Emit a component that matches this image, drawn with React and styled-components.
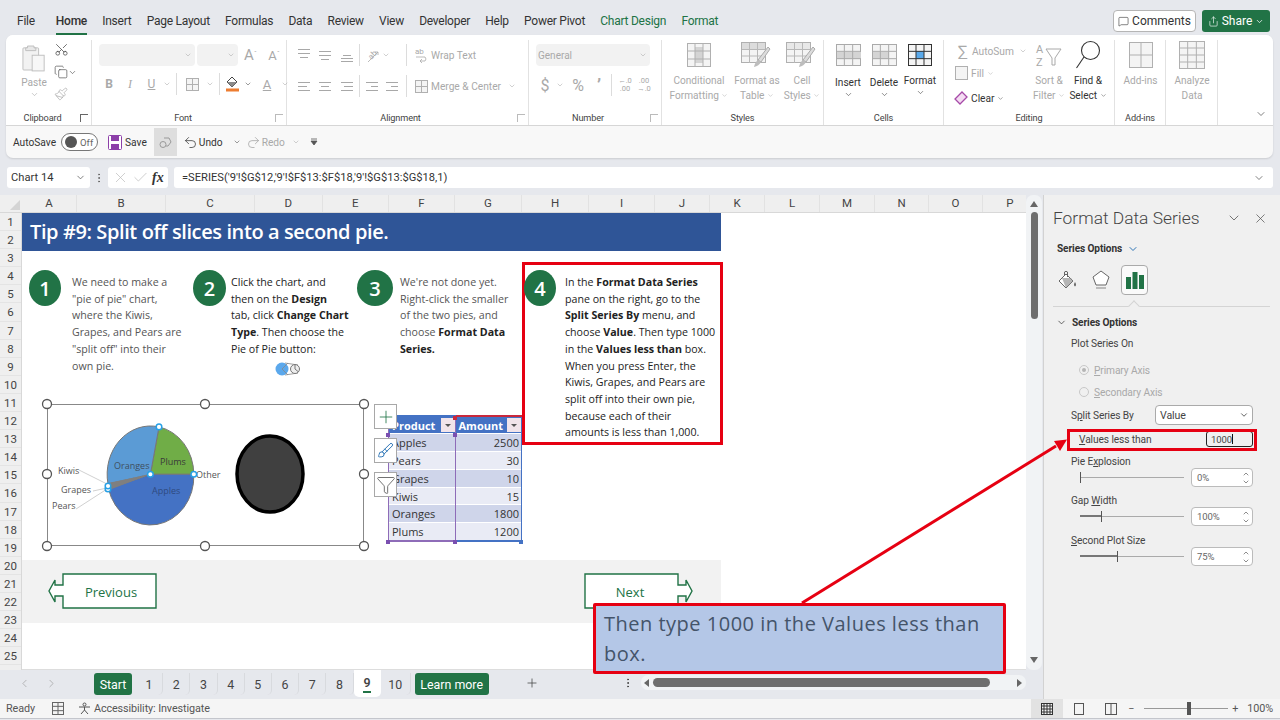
import React from 'react';
import styled, { createGlobalStyle } from 'styled-components';
import {
  Scissors, Copy, Paintbrush, ChevronDown, ChevronLeft, ChevronRight, X, Check, Plus,
  Filter, Undo2, Redo2, MessageSquare, Share, MoreVertical, Brush, ChevronUp,
} from 'lucide-react';

const UI = 'Roboto, "Liberation Sans", sans-serif';
const BODY = '"Open Sans", "Noto Sans", sans-serif';
const GREEN = '#217346';
const RED = '#e60012';
const OFF = '#a9a9a9';

const GlobalStyle = createGlobalStyle`
  html, body { margin: 0; padding: 0; background: #e6e8ed; }
  * { box-sizing: border-box; }
  #root { width: 1280px; height: 720px; overflow: hidden; }
`;

const Page = styled.div`
  position: relative;
  width: 1280px;
  height: 720px;
  display: flex;
  flex-direction: column;
  background: #e6e8ed;
  font-family: ${UI};
  color: #333;
  overflow: hidden;
`;

/* ---------- title tabs ---------- */
const TabRow = styled.div`
  height: 35px;
  display: flex;
  align-items: flex-start;
  padding: 10px 10px 0 17px;
  gap: 15.2px;
  font-size: 12px;
`;
const MenuTab = styled.div`
  height: 25px;
  padding-top: 4px;
  white-space: nowrap;
  letter-spacing: -0.25px;
  color: ${(p) => (p.$chart ? GREEN : '#333')};
  font-weight: ${(p) => (p.$active ? 500 : 400)};
  margin-left: ${(p) => (p.$active ? 5.8 : 0)}px;
  border-bottom: ${(p) => (p.$active ? `2px solid ${GREEN}` : 'none')};
`;
const TabSpacer = styled.div`flex: 1;`;
const CommentsButton = styled.div`
  width: 83px;
  height: 22px;
  margin-right: -9.2px;
  display: flex;
  align-items: center;
  justify-content: center;
  gap: 3px;
  background: #fff;
  border: 1px solid #b5b5b5;
  border-radius: 4px;
  font-size: 12px;
`;
const ShareButton = styled.div`
  width: 68px;
  height: 22px;
  display: flex;
  align-items: center;
  justify-content: center;
  gap: 3px;
  background: ${GREEN};
  color: #fff;
  border-radius: 3px;
  font-size: 12px;
`;

/* ---------- ribbon ---------- */
const RibbonCard = styled.div`
  width: 1267px;
  height: 123px;
  margin-left: 6px;
  background: #f8f8f8;
  border-radius: 7px;
  box-shadow: 0 1px 2px rgba(0, 0, 0, 0.12);
  overflow: hidden;
`;
const Groups = styled.div`
  height: 91px;
  display: flex;
  background: #fff;
  border-bottom: 1px solid #d6d6d6;
  padding-top: 5px;
`;
const Group = styled.div`
  position: relative;
  flex: none;
  width: ${(p) => p.$w}px;
  display: flex;
  flex-direction: column;
  border-right: ${(p) => (p.$plain ? 'none' : '1px solid #e2e2e2')};
`;
const GroupBody = styled.div`
  flex: 1;
  display: flex;
  padding-left: ${(p) => p.$pad || 0}px;
  min-height: 0;
`;
const GroupLabel = styled.div`
  height: 14px;
  line-height: 14px;
  padding-right: ${(p) => p.$pr || 0}px;
  font-size: 9.2px;
  letter-spacing: -0.15px;
  text-align: center;
  color: #444;
`;
const Launcher = styled.div`
  position: absolute;
  right: 3px;
  bottom: 3px;
  width: 8px;
  height: 8px;
  border: 1px solid ${(p) => (p.$on ? '#666' : '#bbb')};
  border-width: 1px 0 0 1px;
`;
const Column = styled.div`
  flex: none;
  display: flex;
  flex-direction: column;
  align-items: ${(p) => p.$align || 'center'};
  width: ${(p) => (p.$w ? `${p.$w}px` : 'auto')};
  padding-top: ${(p) => p.$top || 0}px;
  margin-left: ${(p) => p.$ml || 0}px;
  gap: ${(p) => p.$gap || 0}px;
`;
const ToolRow = styled.div`
  display: flex;
  align-items: center;
  height: ${(p) => p.$h || 22}px;
  margin-top: ${(p) => p.$mt || 0}px;
`;
const Slot = styled.div`
  flex: none;
  width: ${(p) => p.$w}px;
  display: flex;
  flex-direction: ${(p) => (p.$stack ? 'column' : 'row')};
  align-items: center;
  justify-content: center;
  line-height: ${(p) => (p.$stack ? '8px' : 'normal')};
  font-size: ${(p) => p.$size || 12}px;
  font-weight: ${(p) => p.$weight || 400};
  font-style: ${(p) => (p.$italic ? 'italic' : 'normal')};
  text-decoration: ${(p) => (p.$under ? 'underline' : 'none')};
  color: ${(p) => (p.$on ? '#444' : OFF)};
  font-family: ${(p) => (p.$serif ? '"Liberation Serif", serif' : 'inherit')};
`;
const Caret = styled.sup`font-size: 7px;`;
const Sep = styled.div`
  flex: none;
  width: 1px;
  height: ${(p) => p.$h || 22}px;
  background: #dcdcdc;
  margin: 0 ${(p) => p.$m || 0}px;
`;
const FakeSelect = styled.div`
  flex: none;
  width: ${(p) => p.$w}px;
  height: 22px;
  display: flex;
  align-items: center;
  justify-content: space-between;
  padding: 0 3px 0 2px;
  margin-right: ${(p) => p.$mr || 0}px;
  background: #f2f2f2;
  border-radius: 4px;
  font-size: 10px;
  color: ${OFF};
`;
const ToolText = styled.span`
  font-size: 10.2px;
  white-space: nowrap;
  color: ${(p) => (p.$on ? '#333' : OFF)};
  margin-left: ${(p) => p.$ml || 0}px;
`;
const BigTool = styled.div`
  flex: none;
  width: ${(p) => p.$w}px;
  display: flex;
  flex-direction: column;
  align-items: center;
  padding-top: ${(p) => p.$top || 0}px;
  font-size: 10.1px;
  line-height: 15px;
  text-align: center;
  white-space: nowrap;
  color: ${(p) => (p.$on ? '#333' : OFF)};
`;
const BigIcon = styled.div`
  height: ${(p) => p.$h || 30}px;
  display: flex;
  align-items: center;
  justify-content: center;
  margin-bottom: ${(p) => p.$mb ?? 3}px;
`;
const CollapseSlot = styled.div`
  position: absolute;
  right: 6px;
  bottom: 1px;
  color: #555;
`;
const TurnedScissors = styled(Scissors)`transform: rotate(-90deg);`;

/* quick access */
const QuickBar = styled.div`
  height: 32px;
  display: flex;
  align-items: center;
  padding-left: 7px;
  font-size: 10.2px;
  white-space: nowrap;
`;
const Toggle = styled.div`
  width: 37px;
  height: 18px;
  margin-left: 5px;
  display: flex;
  align-items: center;
  gap: 3px;
  padding-left: 3px;
  border: 1px solid #777;
  border-radius: 9px;
  background: #fff;
  font-size: 9.5px;
  color: #666;
`;
const ToggleKnob = styled.div`
  width: 12px;
  height: 12px;
  border-radius: 50%;
  background: #555;
`;
const QuickBox = styled.div`
  width: 23px;
  height: 28px;
  margin: 0 6px 0 7px;
  display: flex;
  align-items: center;
  justify-content: center;
  background: #dedede;
  color: #888;
`;
const QuickText = styled.span`
  color: ${(p) => (p.$off ? OFF : '#333')};
  margin-left: ${(p) => p.$ml || 0}px;
`;
const QuickGap = styled.div`
  display: flex;
  color: ${(p) => (p.$off ? OFF : '#444')};
  margin-left: ${(p) => p.$ml || 0}px;
`;

/* ---------- formula bar ---------- */
const FormulaRow = styled.div`
  height: 21px;
  margin-top: 9px;
  padding-left: 7px;
  display: flex;
  align-items: stretch;
`;
const FormulaBox = styled.div`
  flex: none;
  width: ${(p) => p.$w}px;
  margin-left: ${(p) => p.$ml || 0}px;
  display: flex;
  align-items: center;
  justify-content: ${(p) => p.$justify || 'flex-start'};
  gap: ${(p) => p.$gap || 0}px;
  padding: 0 ${(p) => p.$px || 4}px;
  background: #fff;
  border-radius: 3px;
  font-size: 11.15px;
  color: #333;
  white-space: nowrap;
`;
const FxMark = styled.span`
  font-family: "Liberation Serif", serif;
  font-style: italic;
  font-weight: 700;
  font-size: 14px;
`;
const Kebab = styled.div`
  width: 18px;
  display: flex;
  align-items: center;
  justify-content: center;
  color: #666;
`;

/* ---------- work area ---------- */
const Work = styled.div`
  height: 511px;
  display: flex;
`;
const WorkLeft = styled.div`
  flex: none;
  width: 1043px;
  display: flex;
  flex-direction: column;
`;
const SheetRow = styled.div`
  height: 482px;
  padding-top: 7px;
  display: flex;
`;
const SheetWrap = styled.div`
  flex: none;
  width: 1026px;
  display: flex;
  flex-direction: column;
`;
const ColHeaders = styled.div`
  height: 18px;
  display: flex;
  overflow: hidden;
  background: #efefef;
  border-bottom: 1px solid #d8d8d8;
  font-size: 11.5px;
  color: #444;
`;
const Corner = styled.div`
  flex: none;
  width: 22px;
  position: relative;
  &::after {
    content: '';
    position: absolute;
    right: 2px;
    bottom: 2px;
    border-left: 10px solid transparent;
    border-bottom: 10px solid #d4d4d4;
  }
`;
const ColHead = styled.div`
  flex: none;
  width: ${(p) => p.$w}px;
  text-align: center;
  line-height: 17px;
  border-right: 1px solid #e2e2e2;
`;
const SheetBody = styled.div`
  flex: 1;
  display: flex;
  min-height: 0;
`;
const RowHeaders = styled.div`
  flex: none;
  width: 22px;
  background: #efefef;
  border-right: 1px solid #d8d8d8;
  overflow: hidden;
`;
const RowHead = styled.div`
  height: 18.1px;
  line-height: 18px;
  text-align: center;
  font-size: 11.5px;
  color: #444;
  border-bottom: 1px solid #e4e4e4;
`;
const Canvas = styled.div`
  flex: 1;
  background: #fff;
  border-bottom: 1px solid #ddd;
`;
const Banner = styled.div`
  width: 699px;
  height: 38px;
  padding-left: 8px;
  line-height: 38px;
  background: #2f5597;
  color: #fff;
  font-family: ${BODY};
  font-weight: 600;
  font-size: 20px;
  letter-spacing: -0.4px;
  white-space: nowrap;
`;
const SlideGrid = styled.div`
  display: grid;
  grid-template-columns: 171px 164px 165px 201px;
  grid-template-rows: 153px 156px;
  font-family: ${BODY};
`;
const Step = styled.div`
  display: flex;
  gap: ${(p) => p.$gap}px;
  padding: 19px 0 0 ${(p) => p.$left || 0}px;
`;
const StepBadge = styled.div`
  flex: none;
  width: ${(p) => p.$w || 32}px;
  height: 36px;
  margin-left: ${(p) => p.$ml || 0}px;
  border-radius: 50%;
  display: flex;
  align-items: center;
  justify-content: center;
  background: ${GREEN};
  color: #fff;
  font-weight: 600;
  font-size: 20px;
`;
const StepText = styled.div`
  margin-top: 4px;
  font-size: 10.65px;
  line-height: 16.7px;
  color: ${(p) => (p.$dark ? '#222' : '#555')};
  white-space: nowrap;
  b { font-weight: 700; color: #222; }
`;
const PieButton = styled.div`
  margin: 4px 0 0 44px;
  height: 14px;
  display: flex;
`;
const StepFrame = styled.div`
  grid-column: 4;
  grid-row: 1 / span 2;
  align-self: start;
  width: 201px;
  height: 183px;
  margin-top: 11px;
  padding-top: 5px;
  display: flex;
  gap: 9px;
  border: 3px solid ${RED};
  background: #fff;
  position: relative;
  z-index: 2;
`;
const ChartRow = styled.div`
  grid-column: 1 / span 3;
  grid-row: 2;
  position: relative;
  display: flex;
  align-items: flex-start;
  padding-left: 25px;
`;
const ChartFrame = styled.div`
  flex: none;
  width: 317px;
  height: 142px;
`;
const ChartSvg = styled.svg`overflow: visible;`;
const ChartTools = styled.div`
  position: absolute;
  left: 352px;
  top: 0;
  display: flex;
  flex-direction: column;
  gap: 9px;
  z-index: 3;
`;
const ChartTool = styled.div`
  width: 23px;
  height: 25px;
  display: flex;
  align-items: center;
  justify-content: center;
  background: #fff;
  border: 1px solid #a8a8a8;
  color: ${(p) => p.$color};
`;
const RangeMark = styled.span`
  position: absolute;
  left: ${(p) => p.$x}px;
  top: ${(p) => p.$y}px;
  width: 4px;
  height: 4px;
  background: ${(p) => p.$color};
  z-index: 2;
`;
const DataTable = styled.table`
  flex: none;
  width: 134px;
  margin: 11px 0 0 24px;
  border-collapse: collapse;
  table-layout: fixed;
  font-family: ${BODY};
  font-size: 11px;
  color: #333;
  td, th {
    height: 17.8px;
    padding: 0 2px 0 3px;
    white-space: nowrap;
    overflow: hidden;
  }
  td:first-child, th:first-child {
    border-left: 1px solid #8e6cb8;
    border-right: 1px solid #8e6cb8;
  }
  td:last-child, th:last-child { border-right: 1px solid #4472c4; }
  tbody tr:last-child td { border-bottom: 2px solid #8e6cb8; }
  tbody tr:last-child td:last-child { border-bottom-color: #4472c4; }
  tbody td { border-top: 1px solid #fff; }
  tbody tr:nth-child(odd) td { background: #cfd5ea; }
  tbody tr:nth-child(even) td { background: #e9ebf5; }
  tbody td:last-child { text-align: right; }
`;
const HeadCell = styled.div`
  display: flex;
  align-items: center;
  justify-content: space-between;
  font-weight: 700;
  color: #fff;
  text-align: left;
`;
const HeadTh = styled.th`
  background: #4472c4;
  border-top: 2px solid ${(p) => p.$top};
`;
const FilterDrop = styled.span`
  width: 14px;
  height: 14px;
  margin-right: -2px;
  background: #f1e4ea;
  position: relative;
  &::after {
    content: '';
    position: absolute;
    left: 4px;
    top: 6px;
    border: 3px solid transparent;
    border-top-color: #555;
  }
`;
const NavRow = styled.div`
  width: 699px;
  height: 63px;
  padding: 13px 28px 0 26px;
  display: flex;
  justify-content: space-between;
  background: #f2f2f2;
`;
const NavShape = styled.div`
  position: relative;
  width: 110px;
  height: 36px;
  display: flex;
  align-items: center;
  justify-content: center;
  padding: 2px ${(p) => (p.$next ? '16px' : '0')} 0 ${(p) => (p.$next ? '0' : '16px')};
  font-family: ${BODY};
  font-size: 13px;
  color: ${GREEN};
  svg { position: absolute; left: 0; top: 0; }
  span { position: relative; }
`;

/* vertical scrollbar */
const VScroll = styled.div`
  flex: none;
  width: 16px;
  margin-right: 1px;
  display: flex;
  flex-direction: column;
  align-items: center;
  background: #f1f3f5;
  border-radius: 7px;
  padding-top: 2px;
`;
const ScrollUp = styled.div`
  border: 4px solid transparent;
  border-bottom: 6px solid #666;
  margin-bottom: 5px;
`;
const VThumb = styled.div`
  width: 7px;
  height: 107px;
  border-radius: 4px;
  background: #6e6e6e;
`;
const ScrollDown = styled.div`
  margin-top: auto;
  margin-bottom: 3px;
  border: 4px solid transparent;
  border-top: 6px solid #666;
`;

/* sheet tabs */
const SheetTabs = styled.div`
  height: 29px;
  display: flex;
  align-items: flex-start;
  padding: 0 0 0 18px;
  font-size: 13.4px;
  color: #444;
`;
const TabArrows = styled.div`
  width: 76px;
  height: 26px;
  display: flex;
  align-items: center;
  gap: 14px;
  color: #999;
`;
const GreenTab = styled.div`
  flex: none;
  width: ${(p) => p.$w}px;
  height: 22px;
  margin: 3px ${(p) => p.$mr || 0}px 0 ${(p) => p.$ml || 0}px;
  display: flex;
  align-items: center;
  justify-content: center;
  background: ${GREEN};
  color: #fff;
  border-radius: 3px;
  font-size: 12.4px;
`;
const SheetTab = styled.div`
  flex: none;
  width: ${(p) => p.$w || 27.2}px;
  height: ${(p) => (p.$active ? 27 : 22)}px;
  margin-top: ${(p) => (p.$active ? 0 : 3)}px;
  display: flex;
  flex-direction: column;
  align-items: center;
  justify-content: center;
  background: ${(p) => (p.$active ? '#fff' : 'transparent')};
  border-right: ${(p) => (p.$active ? 'none' : '1px solid #d8dade')};
  border-radius: 0 0 5px 5px;
  font-weight: ${(p) => (p.$active ? 600 : 400)};
  font-size: 12.4px;
  &::after {
    content: ${(p) => (p.$active ? "''" : 'none')};
    width: 8px;
    height: 2px;
    background: ${GREEN};
    margin-top: 1px;
  }
`;
const TabTail = styled.div`
  display: flex;
  align-items: center;
  height: 26px;
  color: #444;
  margin-left: ${(p) => p.$ml}px;
`;
const HScroll = styled.div`
  flex: none;
  width: 385px;
  height: 15px;
  margin: 5px 0 0 ${(p) => p.$ml}px;
  display: flex;
  align-items: center;
  padding: 0 4px 0 3px;
  background: #f1f3f5;
  border-radius: 7px;
`;
const ArrowLeft = styled.div`
  border: 4px solid transparent;
  border-right: 5px solid #666;
  border-left: 0;
  margin-right: 4px;
`;
const HThumb = styled.div`
  width: 337px;
  height: 9px;
  border-radius: 5px;
  background: #6e6e6e;
`;
const ArrowRight = styled.div`
  margin-left: auto;
  border: 4px solid transparent;
  border-left: 5px solid #666;
  border-right: 0;
`;

/* ---------- side pane ---------- */
const Pane = styled.div`
  flex: none;
  width: 237px;
  margin-top: 7px;
  padding: 11px 10px 0 9px;
  background: #f0f0f0;
  border-left: 1px solid #d2d2d2;
  font-size: 10.2px;
  letter-spacing: -0.1px;
  color: #444;
`;
const PaneTop = styled.div`
  display: flex;
  align-items: center;
  height: 24px;
`;
const PaneTitle = styled.div`
  flex: 1;
  font-size: 17.4px;
  font-weight: 300;
  letter-spacing: 0;
  color: #444;
  white-space: nowrap;
`;
const PaneAction = styled.span`
  display: flex;
  color: #555;
  margin-right: ${(p) => p.$mr}px;
`;
const PaneSub = styled.div`
  display: flex;
  align-items: center;
  gap: 5px;
  height: 13px;
  margin: 12px 0 0 4px;
  font-size: 10.1px;
  font-weight: 700;
  color: #333;
`;
const IconTabs = styled.div`
  position: relative;
  display: flex;
  align-items: center;
  height: 42px;
  margin-top: 10px;
  padding-left: 3px;
  border-bottom: 1px solid #d4d4d4;
  padding-bottom: 11px;
  &::after {
    content: '';
    position: absolute;
    left: 77px;
    bottom: -4px;
    width: 7px;
    height: 7px;
    background: #f0f0f0;
    border-left: 1px solid #d4d4d4;
    border-top: 1px solid #d4d4d4;
    transform: rotate(45deg);
  }
`;
const IconSlot = styled.div`
  width: ${(p) => p.$w}px;
  height: 30px;
  margin-right: ${(p) => p.$mr || 0}px;
  display: flex;
  align-items: center;
  justify-content: center;
  border: ${(p) => (p.$active ? '1px solid #aaa' : 'none')};
  border-radius: 4px;
  background: ${(p) => (p.$active ? '#fafafa' : 'none')};
`;
const SectionHead = styled.div`
  display: flex;
  align-items: center;
  gap: 5px;
  height: 13px;
  margin: 9px 0 0 3px;
  font-size: 10.1px;
  font-weight: 700;
  color: #333;
`;
const FieldLabel = styled.div`
  margin: ${(p) => p.$mt || 0}px 0 0 18px;
  height: 14px;
  line-height: ${(p) => p.$lh || 14}px;
  u { text-underline-offset: 1px; }
`;
const RadioRow = styled.div`
  display: flex;
  align-items: center;
  gap: 5px;
  margin: ${(p) => p.$mt}px 0 0 26px;
  color: ${OFF};
  height: 14px;
  u { text-underline-offset: 1px; }
`;
const Radio = styled.div`
  width: 10px;
  height: 10px;
  border-radius: 50%;
  border: 1px solid #c8c8c8;
  display: flex;
  align-items: center;
  justify-content: center;
  &::after {
    content: '';
    width: 4px;
    height: 4px;
    border-radius: 50%;
    background: ${(p) => (p.$on ? '#b5b5b5' : 'transparent')};
  }
`;
const SplitRow = styled.div`
  display: flex;
  align-items: center;
  justify-content: space-between;
  margin: 6px 17px 0 18px;
  height: 20px;
`;
const SelectBox = styled.div`
  width: 98px;
  height: 20px;
  display: flex;
  align-items: center;
  justify-content: space-between;
  padding: 0 3px 0 4px;
  background: #fff;
  border: 1px solid #aaa;
  border-radius: 4px;
  font-size: 10.6px;
`;
const ValuesRow = styled.div`
  display: flex;
  align-items: center;
  justify-content: space-between;
  margin: 6px 17px 0 26px;
  height: 16px;
`;
const ValueInput = styled.div`
  width: 47px;
  height: 16px;
  padding-left: 4px;
  line-height: 15px;
  font-size: 9.5px;
  background: #f0f0f0;
  border: 1px solid #222;
  border-radius: 3px;
  &::after {
    content: '';
    display: inline-block;
    width: 1px;
    height: 10px;
    background: #111;
    vertical-align: -1px;
  }
`;
const SliderRow = styled.div`
  display: flex;
  align-items: center;
  justify-content: space-between;
  margin: 0 17px 0 27px;
  height: 19px;
`;
const SliderTrack = styled.div`
  position: relative;
  width: 104px;
  height: 1px;
  background: #aaa;
`;
const SliderFill = styled.div`
  height: 2px;
  margin-top: -1px;
  background: #777;
`;
const SliderThumb = styled.div`
  position: absolute;
  top: -5px;
  width: 1px;
  height: 11px;
  background: #555;
`;
const SpinBox = styled.div`
  width: 62px;
  height: 19px;
  display: flex;
  align-items: center;
  justify-content: space-between;
  padding: 0 2px 0 5px;
  background: #fff;
  border: 1px solid #bbb;
  border-radius: 4px;
  font-size: 9.5px;
  color: #666;
`;
const SpinArrows = styled.div`
  display: flex;
  flex-direction: column;
  color: #555;
`;

/* ---------- status bar ---------- */
const StatusBar = styled.div`
  height: 20px;
  display: flex;
  align-items: center;
  padding-left: 6px;
  background: #f5f5f5;
  border-bottom: 1px solid #c4c6cc;
  font-size: 10.8px;
  letter-spacing: -0.1px;
  color: #555;
  white-space: nowrap;
`;
const StatusItem = styled.span`
  display: flex;
  flex: ${(p) => (p.$grow ? 1 : 'none')};
  margin: 0 ${(p) => p.$mr || 0}px 0 ${(p) => p.$ml || 0}px;
`;
const ViewButton = styled.div`
  width: 32px;
  height: 19px;
  display: flex;
  align-items: center;
  justify-content: center;
  background: ${(p) => (p.$active ? '#e2e2e2' : 'transparent')};
  color: #555;
`;
const ZoomTrack = styled.div`
  position: relative;
  width: 84px;
  height: 1px;
  margin: 0 4px;
  background: #999;
`;
const ZoomThumb = styled.div`
  position: absolute;
  left: 43px;
  top: -6px;
  width: 4px;
  height: 13px;
  background: #555;
`;

/* ---------- overlays ---------- */
const Callout = styled.div`
  position: absolute;
  left: 593px;
  top: 603px;
  width: 413px;
  height: 71px;
  padding: 3px 8px;
  background: #b4c7e7;
  border: 3px solid ${RED};
  border-radius: 2px;
  font-family: ${BODY};
  font-size: 20px;
  line-height: 30px;
  letter-spacing: 0.5px;
  color: #44546a;
  z-index: 5;
`;
const ValuesFrame = styled.div`
  position: absolute;
  left: 1067px;
  top: 429px;
  width: 190px;
  height: 22px;
  border: 3px solid ${RED};
  pointer-events: none;
  z-index: 5;
`;
const ArrowLayer = styled.svg`
  position: absolute;
  left: 0;
  top: 0;
  z-index: 4;
  pointer-events: none;
`;

/* ---------- drawings ---------- */
const Chev = ({ s = 9, on, color }) => (
  <ChevronDown size={s} strokeWidth={1.6} color={color || (on ? '#444' : OFF)} />
);

const TableIcon = ({ w = 26, h = 22, c = '#b0b0b0', fill = '#d4d4d4', cols = 3, rows = 3, band }) => {
  const lines = [];
  for (let i = 1; i < cols; i++) lines.push(<line key={`c${i}`} x1={(w * i) / cols} y1="0" x2={(w * i) / cols} y2={h} stroke={c} />);
  for (let i = 1; i < rows; i++) lines.push(<line key={`r${i}`} x1="0" y1={(h * i) / rows} x2={w} y2={(h * i) / rows} stroke={c} />);
  return (
    <svg width={w} height={h} viewBox={`0 0 ${w} ${h}`}>
      <rect x=".5" y=".5" width={w - 1} height={h - 1} fill="#f4f4f4" stroke={c} />
      {band && <rect x={band[0]} y={band[1]} width={band[2]} height={band[3]} fill={fill} />}
      {lines}
    </svg>
  );
};

const BrushedTable = ({ band }) => (
  <svg width="32" height="32" viewBox="0 0 32 32">
    <rect x=".5" y="3.5" width="24" height="20" fill="#f4f4f4" stroke="#b0b0b0" />
    <rect x="1" y="4" width="23" height="6" fill={band} />
    <path d="M8.5 4v20M16.500 4v20M1 10.500h24M1 17h24" stroke="#b8b8b8" />
    <path d="M27 8 L17 21 L20 23 L29 10 Z" fill="#dcdcdc" stroke="#aaa" />
    <path d="M17 21 q-3 2 -4 7 q5 -1 7 -5 Z" fill="#bdbdbd" />
  </svg>
);

const LinesIcon = ({ widths, y = [3, 7, 11] }) => (
  <svg width="14" height="14" viewBox="0 0 14 14">
    {widths.map((w, i) => (
      <line key={i} x1={w[0]} x2={w[1]} y1={y[i] + 0.5} y2={y[i] + 0.5} stroke="#a8a8a8" />
    ))}
  </svg>
);

const ClipboardIcon = () => (
  <svg width="24" height="30" viewBox="0 0 26 32">
    <rect x="1" y="5" width="17" height="24" rx="1" fill="#f2f2f2" stroke="#bdbdbd" />
    <path d="M6 5 V3 h7 v2 h2 v3 H4 V5 Z" fill="#e8e8e8" stroke="#bdbdbd" />
    <rect x="11" y="13" width="13" height="17" fill="#f7f7f7" stroke="#bdbdbd" />
  </svg>
);

const FillIcon = () => (
  <svg width="14" height="16" viewBox="0 0 14 16">
    <path d="M6 1 L11 6 L6 11 L1 6 Z" fill="#fff" stroke="#444" />
    <path d="M1 6 H11 L6 11 Z" fill="#8a8a8a" />
    <rect x="0" y="12.500" width="13" height="3" fill="#ed7d31" />
  </svg>
);

const WrapIcon = () => (
  <svg width="13" height="16" viewBox="0 0 13 16">
    <text x="0" y="7" fontSize="8" fill={OFF} fontFamily={UI}>ab</text>
    <path d="M1 10 H10 Q12 12 10 14 H5 M7 12 L5 14 L7 16" fill="none" stroke={OFF} strokeWidth=".8" />
  </svg>
);

const OrientIcon = () => (
  <svg width="15" height="15" viewBox="0 0 15 15">
    <text x="3" y="10" fontSize="8" fill={OFF} fontFamily={UI} transform="rotate(-45 7 7)">ab</text>
    <path d="M3 14 L13 4 M10 4 H13 V7" fill="none" stroke={OFF} strokeWidth=".8" />
  </svg>
);

const FindIcon = () => (
  <svg width="26" height="30" viewBox="0 0 26 30">
    <circle cx="15.500" cy="10.500" r="9" fill="none" stroke="#333" strokeWidth="1.100" />
    <line x1="9" y1="17" x2="1.500" y2="28" stroke="#333" strokeWidth="1.100" />
  </svg>
);

const SortIcon = () => (
  <svg width="28" height="28" viewBox="0 0 28 28">
    <text x="1" y="12" fontSize="11" fill={OFF} fontFamily={UI}>A</text>
    <text x="1" y="25" fontSize="11" fill={OFF} fontFamily={UI}>Z</text>
    <path d="M11 8 H26 L20 17 V24 H17 V17 Z" fill="none" stroke={OFF} />
  </svg>
);

const ChartBarsIcon = () => (
  <svg width="18" height="18" viewBox="0 0 18 18">
    <rect x="0" y="6" width="5" height="12" fill={GREEN} />
    <rect x="6.500" y="1" width="5" height="17" fill={GREEN} />
    <rect x="13" y="4" width="5" height="14" fill={GREEN} />
  </svg>
);

const BucketIcon = () => (
  <svg width="20" height="20" viewBox="0 0 20 20">
    <path d="M8 4 L15 11 L8 18 L1 11 Z" fill="#fff" stroke="#666" />
    <path d="M6.500 5 L6.500 2 Q8 .5 9.500 2 L9.500 7" fill="none" stroke="#666" />
    <path d="M4 8 H13 L15 11 L8 18 Z" fill="#8e8e8e" opacity=".65" />
    <path d="M17 12 q2 3 0 4.500 q-2 -1.500 0 -4.500Z" fill="#666" />
  </svg>
);

const PentagonIcon = () => (
  <svg width="18" height="20" viewBox="0 0 18 20">
    <path d="M9 1 L17 7 L14 15 H4 L1 7 Z" fill="#fff" stroke="#666" />
    <path d="M4 18 H14" stroke="#bbb" strokeWidth="2" />
  </svg>
);

const PieOfPieIcon = () => (
  <svg width="27" height="14" viewBox="0 0 27 14">
    <circle cx="7" cy="7" r="6.500" fill="#5ba8ec" />
    <path d="M7 7 L13 1 M7 7 L13 13 M10 1 L23 3 M10 13 L23 11" stroke="#888" fill="none" strokeWidth=".8" />
    <circle cx="20" cy="7" r="4.500" fill="#eee" stroke="#777" />
    <path d="M20 3 V7 L23 9.500" stroke="#777" fill="none" />
  </svg>
);

const NavArrow = ({ flip }) => (
  <svg width="110" height="36" viewBox="0 0 110 36">
    <path
      d="M15 1 H108 V35 H15 V23 H7 V29 L1 18 L7 7 V12 H15 Z"
      fill="#fff"
      stroke={GREEN}
      strokeWidth="1.400"
      transform={flip ? 'translate(110 0) scale(-1 1)' : undefined}
    />
  </svg>
);

const Handle = ({ x, y }) => <circle cx={x} cy={y} r="4.500" fill="#fff" stroke="#555" strokeWidth="1.300" />;
const Dot = ({ x, y }) => <circle cx={x} cy={y} r="2.800" fill="#fff" stroke="#27a0e6" strokeWidth="1.500" />;

const PieChart = () => (
  <ChartSvg width="317" height="142" viewBox="0 0 317 142">
    <rect x="0.5" y="0.5" width="316" height="141" fill="#fff" stroke="#888" />
    <g fontFamily={BODY} fontSize="9" fill="#555">
      <path d="M103.400 70.300 L112 22.900 A43.400 48.400 0 0 1 146.800 70.300 Z" fill="#70ad47" stroke="#777" />
      <path d="M103.400 70.300 L146.800 70.300 A43.400 48.400 0 0 1 61.500 85 Z" fill="#4472c4" stroke="#777" />
      <path d="M103.400 70.300 L61 80 A43.400 48.400 0 0 1 112 22.900 Z" fill="#5b9bd5" stroke="#777" />
      <path d="M103.400 70.300 L61 79 L62 86 Z" fill="#7f7f7f" />
      <text x="67" y="65" fill="#3f4f60">Oranges</text>
      <text x="113" y="61" fill="#3a3a3a">Plums</text>
      <text x="105" y="90" fill="#2f4a80">Apples</text>
      <text x="149" y="74">Other</text>
      <text x="11" y="70">Kiwis</text>
      <text x="14" y="89">Grapes</text>
      <text x="5" y="105">Pears</text>
      <path d="M32 66 L60 80 M46 87 L60 84 M29 105 L60 85" fill="none" stroke="#c4c4c4" strokeWidth=".8" />
      <ellipse cx="223" cy="70" rx="33" ry="38" fill="#404040" stroke="#000" strokeWidth="3.500" />
      <Dot x={112} y={22.900} />
      <Dot x={146.800} y={70.300} />
      <Dot x={103.400} y={70.300} />
      <Dot x={61} y={85} />
      <Dot x={61} y={82} />
    </g>
    <Handle x={0} y={0} />
    <Handle x={158} y={0} />
    <Handle x={317} y={0} />
    <Handle x={0} y={70} />
    <Handle x={317} y={70} />
    <Handle x={0} y={142} />
    <Handle x={158} y={142} />
    <Handle x={317} y={142} />
  </ChartSvg>
);

const MENU = ['File', 'Home', 'Insert', 'Page Layout', 'Formulas', 'Data', 'Review', 'View', 'Developer', 'Help', 'Power Pivot'];
const COLS = [['A', 55], ['B', 89], ['C', 89], ['D', 67.6], ['E', 66.4], ['F', 66], ['G', 67], ['H', 67], ['I', 66], ['J', 55], ['K', 55], ['L', 55], ['M', 55], ['N', 54], ['O', 54], ['P', 55]];
const ROWS = Array.from({ length: 25 }, (_, i) => i + 1);
const DATA = [['Apples', 2500], ['Pears', 30], ['Grapes', 10], ['Kiwis', 15], ['Oranges', 1800], ['Plums', 1200]];
const MARKS = [
  [364, 29, '#7a4fb0'], [431, 29, '#7a4fb0'], [364, 136, '#7a4fb0'], [431, 136, '#7a4fb0'],
  [431, 12, '#c8283c'], [497, 136, '#4472c4'],
];
const SLIDERS = [
  { label: <>Pie E<u>x</u>plosion</>, value: '0%', pos: 0, mt: 7 },
  { label: <>Gap <u>W</u>idth</>, value: '100%', pos: 21, mt: 6 },
  { label: <><u>S</u>econd Plot Size</>, value: '75%', pos: 37, mt: 7 },
];

const Ribbon = () => (
  <RibbonCard>
    <Groups>
      <Group $w={86}>
        <GroupBody $pad={10}>
          <BigTool $w={36} $top={2}>
            <BigIcon $h={32} $mb={1}><ClipboardIcon /></BigIcon>
            Paste
            <Chev />
          </BigTool>
          <Column $w={22} $top={2} $gap={7} $ml={2} $align="flex-start">
            <TurnedScissors size={15} strokeWidth={1.3} color="#555" />
            <ToolRow $h={16}><Copy size={14} strokeWidth={1.2} color="#555" /><Chev on /></ToolRow>
            <Paintbrush size={14} strokeWidth={1.2} color={OFF} />
          </Column>
        </GroupBody>
        <GroupLabel $pr={12}>Clipboard</GroupLabel>
        <Launcher $on />
      </Group>

      <Group $w={195}>
        <GroupBody $pad={7}>
          <Column $align="flex-start">
            <ToolRow $mt={4}>
              <FakeSelect $w={96} $mr={2}><span /><Chev s={8} /></FakeSelect>
              <FakeSelect $w={41}><span /><Chev s={8} /></FakeSelect>
              <Slot $w={25} $size={15}>A<Caret>ˆ</Caret></Slot>
              <Slot $w={22} $size={13}>A<Caret>ˇ</Caret></Slot>
            </ToolRow>
            <ToolRow $mt={7}>
              <Slot $w={20} $weight={700}>B</Slot>
              <Slot $w={22} $italic $serif>I</Slot>
              <Slot $w={21} $under>U</Slot>
              <Slot $w={10}><Chev s={8} /></Slot>
              <Sep $m={4} />
              <Slot $w={22}><TableIcon w={13} h={13} cols={2} rows={2} /></Slot>
              <Slot $w={13}><Chev s={8} /></Slot>
              <Sep $m={3} />
              <Slot $w={20}><FillIcon /></Slot>
              <Slot $w={10}><Chev s={8} on /></Slot>
              <Slot $w={28} $under $size={13}>A</Slot>
              <Slot $w={8}><Chev s={8} /></Slot>
            </ToolRow>
          </Column>
        </GroupBody>
        <GroupLabel $pr={12}>Font</GroupLabel>
        <Launcher />
      </Group>

      <Group $w={242}>
        <GroupBody $pad={6}>
          <Column $align="flex-start">
            <ToolRow $mt={4}>
              <Slot $w={21}><LinesIcon widths={[[1, 13], [1, 13], [3, 11]]} y={[1, 5, 9]} /></Slot>
              <Slot $w={22}><LinesIcon widths={[[1, 13], [1, 13], [3, 11]]} y={[3, 7, 11]} /></Slot>
              <Slot $w={21}><LinesIcon widths={[[3, 11], [1, 13], [1, 13]]} y={[7, 10, 13]} /></Slot>
              <Sep $m={2} />
              <Slot $w={20}><OrientIcon /></Slot>
              <Slot $w={8}><Chev s={8} /></Slot>
              <Slot $w={12} />
              <Sep $m={4} />
              <Slot $w={20}><WrapIcon /></Slot>
              <ToolText>Wrap Text</ToolText>
            </ToolRow>
            <ToolRow $mt={9}>
              <Slot $w={21}><LinesIcon widths={[[1, 13], [1, 10], [1, 13]]} /></Slot>
              <Slot $w={22}><LinesIcon widths={[[1, 13], [3, 11], [1, 13]]} /></Slot>
              <Slot $w={21}><LinesIcon widths={[[1, 13], [4, 13], [1, 13]]} /></Slot>
              <Sep $m={2} />
              <Slot $w={20}><LinesIcon widths={[[1, 13], [6, 13], [1, 13]]} /></Slot>
              <Slot $w={20}><LinesIcon widths={[[1, 13], [6, 13], [1, 13]]} /></Slot>
              <Sep $m={4} />
              <Slot $w={20}><TableIcon w={13} h={13} cols={2} rows={2} /></Slot>
              <ToolText>Merge &amp; Center</ToolText>
              <Slot $w={22}><Chev s={8} /></Slot>
            </ToolRow>
          </Column>
        </GroupBody>
        <GroupLabel $pr={14}>Alignment</GroupLabel>
        <Launcher />
      </Group>

      <Group $w={133}>
        <GroupBody $pad={7}>
          <Column $align="flex-start">
            <ToolRow $mt={4}>
              <FakeSelect $w={114}>General<Chev s={8} /></FakeSelect>
            </ToolRow>
            <ToolRow $mt={8}>
              <Slot $w={18} $size={16}>$</Slot>
              <Slot $w={12}><Chev s={8} /></Slot>
              <Slot $w={24} $size={16}>%</Slot>
              <Slot $w={18} $size={18} $weight={700}>’</Slot>
              <Sep $m={3} />
              <Slot $w={20} $size={7.5} $stack><span>←.0</span><span>.00</span></Slot>
              <Slot $w={18} $size={7.5} $stack><span>.00</span><span>→.0</span></Slot>
            </ToolRow>
          </Column>
        </GroupBody>
        <GroupLabel $pr={14}>Number</GroupLabel>
        <Launcher />
      </Group>

      <Group $w={162}>
        <GroupBody $pad={5}>
          <BigTool $w={64}>
            <BigIcon><TableIcon w={24} h={24} band={[8, 4, 8, 16]} /></BigIcon>
            Conditional
            <span>Formatting <Chev s={7} /></span>
          </BigTool>
          <BigTool $w={52}>
            <BigIcon><BrushedTable band="#dcdcdc" /></BigIcon>
            Format as
            <span>Table <Chev s={7} /></span>
          </BigTool>
          <BigTool $w={38}>
            <BigIcon><BrushedTable band="#e8e8e8" /></BigIcon>
            Cell
            <span>Styles <Chev s={7} /></span>
          </BigTool>
        </GroupBody>
        <GroupLabel>Styles</GroupLabel>
      </Group>

      <Group $w={120}>
        <GroupBody $pad={6}>
          <BigTool $w={36} $on>
            <BigIcon $mb={5}><TableIcon w={25} h={22} c="#aaa" band={[1, 8, 24, 7]} /></BigIcon>
            Insert
            <Chev on />
          </BigTool>
          <BigTool $w={36} $on>
            <BigIcon $mb={5}><TableIcon w={25} h={22} c="#aaa" band={[1, 8, 16, 7]} /></BigIcon>
            Delete
            <Chev on />
          </BigTool>
          <BigTool $w={36} $on>
            <BigIcon><TableIcon w={24} h={22} c="#333" fill="#5aa9ea" band={[8, 7, 8, 8]} /></BigIcon>
            Format
            <Chev on />
          </BigTool>
        </GroupBody>
        <GroupLabel>Cells</GroupLabel>
      </Group>

      <Group $w={171}>
        <GroupBody $pad={10}>
          <Column $w={75} $align="flex-start" $top={1}>
            <ToolRow $h={20}>
              <Slot $w={17} $size={16}>∑</Slot>
              <ToolText $ml={1}>AutoSum</ToolText>
              <Slot $w={18}><Chev s={8} /></Slot>
            </ToolRow>
            <ToolRow $h={16} $mt={4}>
              <Slot $w={14}><TableIcon w={13} h={14} cols={1} rows={1} /></Slot>
              <ToolText $ml={3}>Fill <Chev s={7} /></ToolText>
            </ToolRow>
            <ToolRow $h={18} $mt={8}>
              <svg width="14" height="14" viewBox="0 0 14 14">
                <path d="M8 1 L13 6 L6 13 L1 8 Z" fill="#f4dcf2" stroke="#a64aa8" strokeWidth="1.300" />
              </svg>
              <ToolText $on $ml={3}>Clear <Chev s={7} on /></ToolText>
            </ToolRow>
          </Column>
          <BigTool $w={40}>
            <BigIcon><SortIcon /></BigIcon>
            Sort &amp;
            <span>Filter <Chev s={7} /></span>
          </BigTool>
          <BigTool $w={38} $on>
            <BigIcon><FindIcon /></BigIcon>
            Find &amp;
            <span>Select <Chev s={7} on /></span>
          </BigTool>
        </GroupBody>
        <GroupLabel>Editing</GroupLabel>
      </Group>

      <Group $w={51}>
        <GroupBody>
          <BigTool $w={51}>
            <BigIcon><TableIcon w={24} h={26} cols={2} rows={2} /></BigIcon>
            Add-ins
          </BigTool>
        </GroupBody>
        <GroupLabel>Add-ins</GroupLabel>
      </Group>

      <Group $w={52}>
        <GroupBody>
          <BigTool $w={52}>
            <BigIcon><TableIcon w={26} h={28} cols={3} rows={4} /></BigIcon>
            Analyze
            <span>Data</span>
          </BigTool>
        </GroupBody>
      </Group>

      <Group $w={55} $plain>
        <CollapseSlot><ChevronDown size={12} strokeWidth={1.5} /></CollapseSlot>
      </Group>
    </Groups>
    <QuickBar>
      AutoSave
      <Toggle><ToggleKnob />Off</Toggle>
      <QuickGap $ml={10}>
        <svg width="14" height="15" viewBox="0 0 14 15">
          <rect x=".5" y=".5" width="13" height="14" rx="1" fill="#fff" stroke="#8c3fa8" />
          <rect x="3" y="1" width="8" height="5" fill="#8c3fa8" />
          <rect x="3" y="9" width="8" height="6" fill="#8c3fa8" />
        </svg>
      </QuickGap>
      <QuickText $ml={3}>Save</QuickText>
      <QuickBox>
        <svg width="13" height="14" viewBox="0 0 13 14">
          <circle cx="4" cy="9.500" r="3" fill="none" stroke="#999" />
          <path d="M5 3 H10 L12 7 L9 11 H7" fill="none" stroke="#999" />
        </svg>
      </QuickBox>
      <QuickGap><Undo2 size={15} strokeWidth={1.3} /></QuickGap>
      <QuickText $ml={1}>Undo</QuickText>
      <QuickGap $ml={10}><Chev s={8} on /></QuickGap>
      <QuickGap $off $ml={5}><Redo2 size={15} strokeWidth={1.3} /></QuickGap>
      <QuickText $off $ml={1}>Redo</QuickText>
      <QuickGap $off $ml={7}><Chev s={8} /></QuickGap>
      <QuickGap $ml={10}>
        <svg width="8" height="8" viewBox="0 0 8 8"><path d="M1 1 H7 M1 3 H7 L4 7 Z" fill="#555" stroke="#555" strokeWidth=".8" /></svg>
      </QuickGap>
    </QuickBar>
  </RibbonCard>
);

const Slide = () => (
  <>
    <Banner>Tip #9: Split off slices into a second pie.</Banner>
    <SlideGrid>
      <Step $gap={11} $left={7}>
        <StepBadge>1</StepBadge>
        <StepText>
          We need to make a<br />"pie of pie" chart,<br />where the Kiwis,<br />Grapes, and Pears are<br />"split off" into their<br />own pie.
        </StepText>
      </Step>
      <Step $gap={5}>
        <StepBadge $w={33}>2</StepBadge>
        <StepText $dark>
          Click the chart, and<br />then on the <b>Design</b><br />tab, click <b>Change Chart</b><br /><b>Type</b>. Then choose the<br />Pie of Pie button:
          <PieButton><PieOfPieIcon /></PieButton>
        </StepText>
      </Step>
      <Step $gap={7}>
        <StepBadge $w={36}>3</StepBadge>
        <StepText>
          We're not done yet.<br />Right-click the smaller<br />of the two pies, and<br />choose <b>Format Data</b><br /><b>Series.</b>
        </StepText>
      </Step>
      <StepFrame>
        <StepBadge $ml={-1}>4</StepBadge>
        <StepText $dark>
          In the <b>Format Data Series</b><br />pane on the right, go to the<br /><b>Split Series By</b> menu, and<br />choose <b>Value</b>. Then type 1000<br />in the <b>Values less than</b> box.<br />When you press Enter, the<br />Kiwis, Grapes, and Pears are<br />split off into their own pie,<br />because each of their<br />amounts is less than 1,000.
        </StepText>
      </StepFrame>
      <ChartRow>
        <ChartFrame><PieChart /></ChartFrame>
        <ChartTools>
          <ChartTool $color={GREEN}><Plus size={20} strokeWidth={1} /></ChartTool>
          <ChartTool $color="#2e75b6"><Brush size={17} strokeWidth={1.4} /></ChartTool>
          <ChartTool $color="#555"><Filter size={20} strokeWidth={1} /></ChartTool>
        </ChartTools>
        <DataTable>
          <thead>
            <tr>
              <HeadTh $top="#4472c4"><HeadCell>Product<FilterDrop /></HeadCell></HeadTh>
              <HeadTh $top="#c8283c"><HeadCell>Amount<FilterDrop /></HeadCell></HeadTh>
            </tr>
          </thead>
          <tbody>
            {DATA.map(([name, amount]) => (
              <tr key={name}>
                <td>{name}</td>
                <td>{amount}</td>
              </tr>
            ))}
          </tbody>
        </DataTable>
        {MARKS.map(([x, y, color]) => <RangeMark key={`${x}-${y}`} $x={x} $y={y} $color={color} />)}
      </ChartRow>
    </SlideGrid>
    <NavRow>
      <NavShape><NavArrow /><span>Previous</span></NavShape>
      <NavShape $next><NavArrow flip /><span>Next</span></NavShape>
    </NavRow>
  </>
);

const FormatPane = () => (
  <Pane>
    <PaneTop>
      <PaneTitle>Format Data Series</PaneTitle>
      <PaneAction $mr={11}><ChevronDown size={16} strokeWidth={1.2} /></PaneAction>
      <PaneAction $mr={2}><X size={15} strokeWidth={1.2} /></PaneAction>
    </PaneTop>
    <PaneSub>Series Options <ChevronDown size={12} color="#2e75b6" strokeWidth={2} /></PaneSub>
    <IconTabs>
      <IconSlot $w={24} $mr={9}><BucketIcon /></IconSlot>
      <IconSlot $w={24} $mr={8}><PentagonIcon /></IconSlot>
      <IconSlot $w={27} $active><ChartBarsIcon /></IconSlot>
    </IconTabs>
    <SectionHead><ChevronDown size={11} strokeWidth={1.6} />Series Options</SectionHead>
    <FieldLabel $mt={8}>Plot Series On</FieldLabel>
    <RadioRow $mt={12}><Radio $on /><span><u>P</u>rimary Axis</span></RadioRow>
    <RadioRow $mt={8}><Radio /><span><u>S</u>econdary Axis</span></RadioRow>
    <SplitRow>
      <span>S<u>p</u>lit Series By</span>
      <SelectBox>Value<ChevronDown size={10} strokeWidth={2} /></SelectBox>
    </SplitRow>
    <ValuesRow>
      <span><u>V</u>alues less than</span>
      <ValueInput>1000</ValueInput>
    </ValuesRow>
    {SLIDERS.map((s) => (
      <React.Fragment key={s.value}>
        <FieldLabel $mt={s.mt} $lh={16}>{s.label}</FieldLabel>
        <SliderRow>
          <SliderTrack>
            <SliderFill style={{ width: s.pos }} />
            <SliderThumb style={{ left: s.pos }} />
          </SliderTrack>
          <SpinBox>
            {s.value}
            <SpinArrows>
              <ChevronUp size={8} strokeWidth={2} />
              <ChevronDown size={8} strokeWidth={2} />
            </SpinArrows>
          </SpinBox>
        </SliderRow>
      </React.Fragment>
    ))}
  </Pane>
);

export default function App() {
  return (
    <Page>
      <GlobalStyle />
      <TabRow>
        {MENU.map((m) => (
          <MenuTab key={m} $active={m === 'Home'}>{m}</MenuTab>
        ))}
        <MenuTab $chart>Chart Design</MenuTab>
        <MenuTab $chart>Format</MenuTab>
        <TabSpacer />
        <CommentsButton><MessageSquare size={11} strokeWidth={1.3} />Comments</CommentsButton>
        <ShareButton>
          <Share size={11} strokeWidth={1.4} />Share<ChevronDown size={9} strokeWidth={2} />
        </ShareButton>
      </TabRow>

      <Ribbon />

      <FormulaRow>
        <FormulaBox $w={83} $justify="space-between">Chart 14<ChevronDown size={11} strokeWidth={1.6} color="#555" /></FormulaBox>
        <Kebab><MoreVertical size={12} /></Kebab>
        <FormulaBox $w={60} $gap={3} $px={4}>
          <X size={17} strokeWidth={1} color="#bbb" />
          <Check size={17} strokeWidth={1} color="#bbb" />
          <FxMark>fx</FxMark>
        </FormulaBox>
        <FormulaBox $w={1099} $ml={6} $px={8} $justify="space-between">
          =SERIES('9'!$G$12,'9'!$F$13:$F$18,'9'!$G$13:$G$18,1)
          <ChevronDown size={12} strokeWidth={1.5} color="#555" />
        </FormulaBox>
      </FormulaRow>

      <Work>
        <WorkLeft>
          <SheetRow>
            <SheetWrap>
              <ColHeaders>
                <Corner />
                {COLS.map(([c, w]) => <ColHead key={c} $w={w}>{c}</ColHead>)}
              </ColHeaders>
              <SheetBody>
                <RowHeaders>
                  {ROWS.map((r) => <RowHead key={r}>{r}</RowHead>)}
                </RowHeaders>
                <Canvas><Slide /></Canvas>
              </SheetBody>
            </SheetWrap>
            <VScroll>
              <ScrollUp />
              <VThumb />
              <ScrollDown />
            </VScroll>
          </SheetRow>
          <SheetTabs>
            <TabArrows>
              <ChevronLeft size={13} strokeWidth={1.2} />
              <ChevronRight size={13} strokeWidth={1.2} />
            </TabArrows>
            <GreenTab $w={38} $mr={4}>Start</GreenTab>
            {[1, 2, 3, 4, 5, 6, 7, 8].map((n) => <SheetTab key={n}>{n}</SheetTab>)}
            <SheetTab $active>9</SheetTab>
            <SheetTab $w={30}>10</SheetTab>
            <GreenTab $w={74} $ml={4}>Learn more</GreenTab>
            <TabTail $ml={36}><Plus size={14} strokeWidth={1.3} /></TabTail>
            <TabTail $ml={83}><MoreVertical size={12} strokeWidth={2} /></TabTail>
            <HScroll $ml={7}>
              <ArrowLeft />
              <HThumb />
              <ArrowRight />
            </HScroll>
          </SheetTabs>
        </WorkLeft>
        <FormatPane />
      </Work>

      <StatusBar>
        Ready
        <StatusItem $ml={17}><TableIcon w={12} h={13} c="#666" cols={2} rows={3} /></StatusItem>
        <StatusItem $ml={14} $mr={3}>
          <svg width="13" height="13" viewBox="0 0 13 13">
            <circle cx="6.500" cy="2.500" r="1.500" fill="none" stroke="#555" />
            <path d="M1 5 H12 M6.500 5 V8 M6.500 8 L3 12 M6.500 8 L10 12" stroke="#555" fill="none" />
          </svg>
        </StatusItem>
        Accessibility: Investigate
        <StatusItem $grow />
        <ViewButton $active><TableIcon w={12} h={12} c="#333" cols={4} rows={4} /></ViewButton>
        <ViewButton><TableIcon w={10} h={12} c="#555" cols={1} rows={1} /></ViewButton>
        <ViewButton><TableIcon w={12} h={12} c="#555" cols={2} rows={1} /></ViewButton>
        <StatusItem $ml={1} $mr={6}>−</StatusItem>
        <ZoomTrack><ZoomThumb /></ZoomTrack>
        <span>+</span>
        <StatusItem $ml={9} $mr={7}>100%</StatusItem>
      </StatusBar>

      <ArrowLayer width="1280" height="720" viewBox="0 0 1280 720">
        <line x1="802" y1="603" x2="1056" y2="446" stroke={RED} strokeWidth="3" />
        <path d="M1067 439.500 L1054 441 L1060 451 Z" fill={RED} />
      </ArrowLayer>
      <ValuesFrame />
      <Callout>Then type 1000 in the Values less than box.</Callout>
    </Page>
  );
}
